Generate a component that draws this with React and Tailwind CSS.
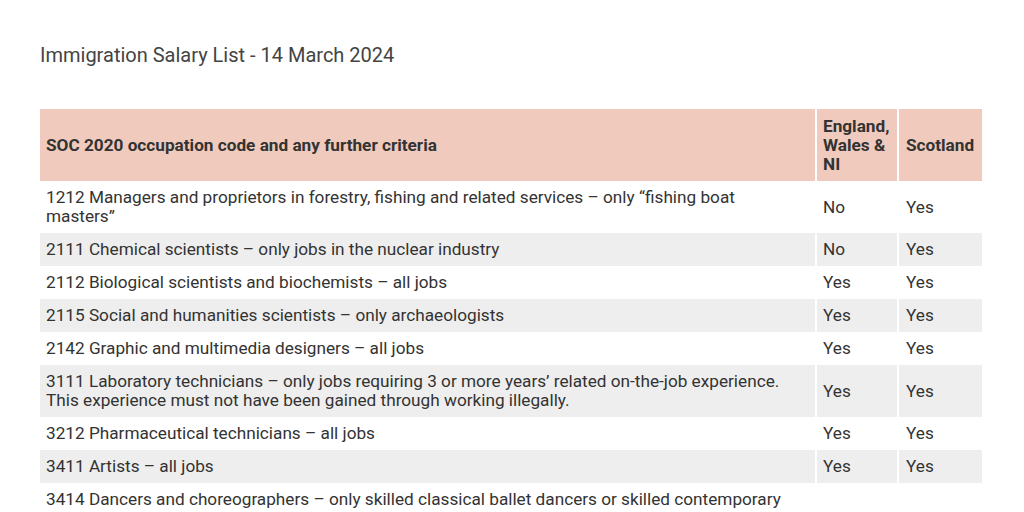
import React from "react";

const rows = [
  ["1212 Managers and proprietors in forestry, fishing and related services – only “fishing boat masters”", "No", "Yes"],
  ["2111 Chemical scientists – only jobs in the nuclear industry", "No", "Yes"],
  ["2112 Biological scientists and biochemists – all jobs", "Yes", "Yes"],
  ["2115 Social and humanities scientists – only archaeologists", "Yes", "Yes"],
  ["2142 Graphic and multimedia designers – all jobs", "Yes", "Yes"],
  ["3111 Laboratory technicians – only jobs requiring 3 or more years’ related on-the-job experience. This experience must not have been gained through working illegally.", "Yes", "Yes"],
  ["3212 Pharmaceutical technicians – all jobs", "Yes", "Yes"],
  ["3411 Artists – all jobs", "Yes", "Yes"],
  ["3414 Dancers and choreographers – only skilled classical ballet dancers or skilled contemporary dancers who meet the standard required by internationally recognised United Kingdom dance companies", "Yes", "Yes"],
];

export default function App() {
  return (
    <div className="min-h-screen bg-white px-10 pt-[41px] text-[#333333]" style={{ fontFamily: "Roboto, 'Liberation Sans', sans-serif" }}>
      <h1 className="text-[20px] leading-[28px] font-normal text-[#444444]">
        Immigration Salary List - 14 March 2024
      </h1>
      <table className="mt-[40px] w-[942px] table-fixed border-separate border-spacing-0 text-[17.2px] leading-[19px]">
        <colgroup>
          <col className="w-[777px]" />
          <col className="w-[82px]" />
          <col className="w-[83px]" />
        </colgroup>
        <thead>
          <tr className="bg-[#f0cbbd]">
            <th className="h-[72px] border-r-2 border-white py-[7px] pl-[6px] pr-[20px] text-left align-middle font-bold">
              SOC 2020 occupation code and any further criteria
            </th>
            <th className="border-r-2 border-white px-[6px] py-[7px] text-left align-middle font-bold">
              England, Wales &amp; NI
            </th>
            <th className="px-[7px] py-[7px] text-left align-middle font-bold">Scotland</th>
          </tr>
        </thead>
        <tbody>
          {rows.map((r, i) => (
            <tr key={i} className={i % 2 === 1 ? "bg-[#eeeeee]" : "bg-white"}>
              <td className="border-r-2 border-white py-[7px] pl-[6px] pr-[20px] align-middle">{r[0]}</td>
              <td className="border-r-2 border-white px-[6px] py-[7px] align-middle">{r[1]}</td>
              <td className="px-[7px] py-[7px] align-middle">{r[2]}</td>
            </tr>
          ))}
        </tbody>
      </table>
    </div>
  );
}
